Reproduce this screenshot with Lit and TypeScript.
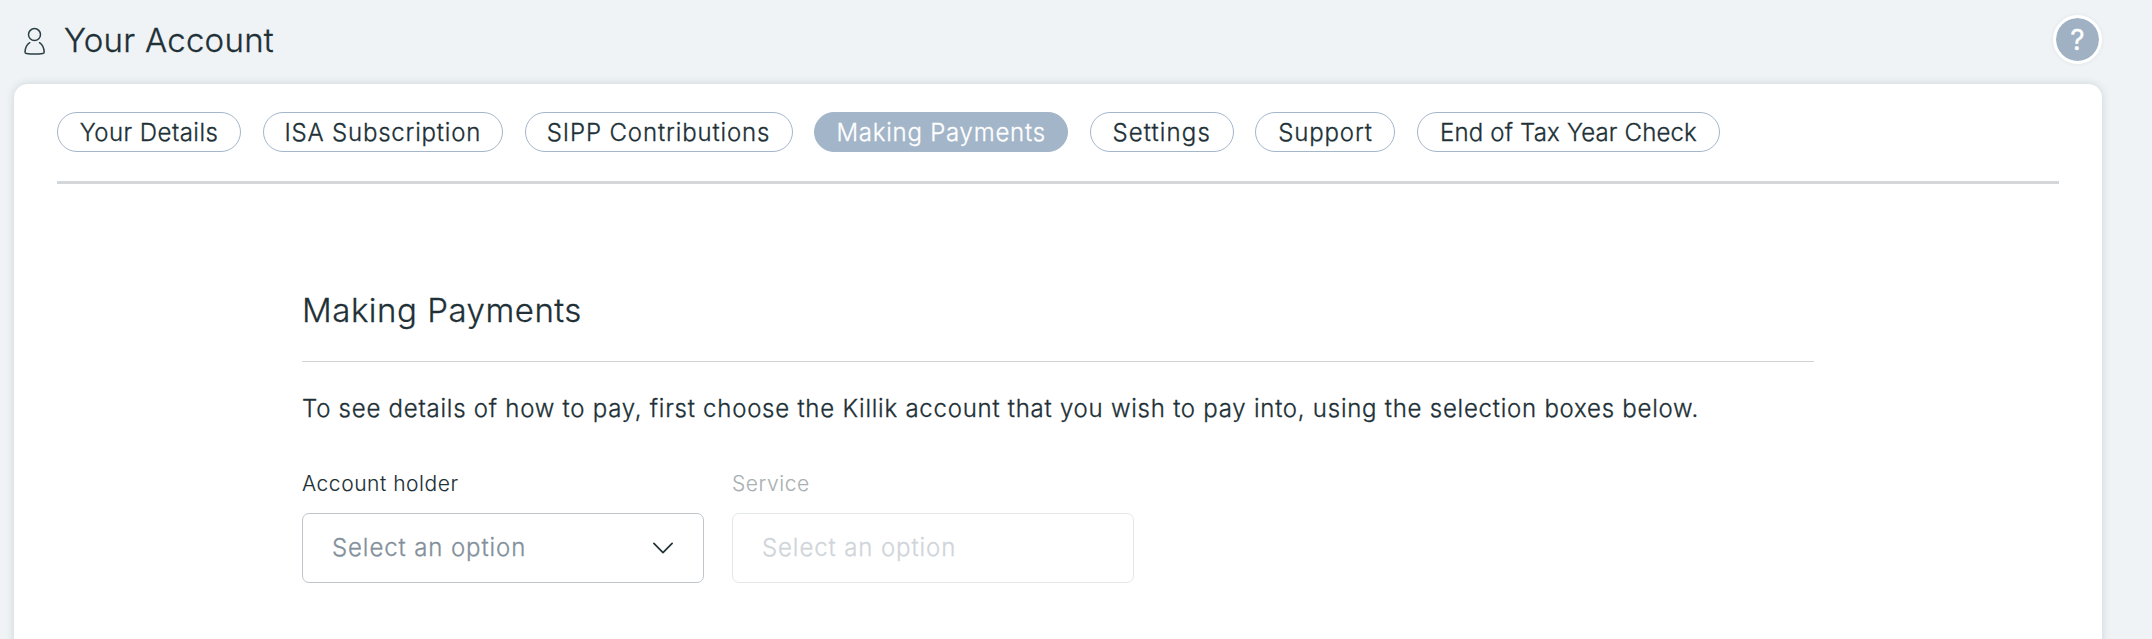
import { LitElement, html, css } from 'lit';
import { customElement, property } from 'lit/decorators.js';
import { classMap } from 'lit/directives/class-map.js';

interface Tab {
  id: string;
  label: string;
}

const TABS: Tab[] = [
  { id: 'details', label: 'Your Details' },
  { id: 'isa', label: 'ISA Subscription' },
  { id: 'sipp', label: 'SIPP Contributions' },
  { id: 'payments', label: 'Making Payments' },
  { id: 'settings', label: 'Settings' },
  { id: 'support', label: 'Support' },
  { id: 'tax', label: 'End of Tax Year Check' },
];

@customElement('select-field')
export class SelectField extends LitElement {
  @property() label = '';
  @property({ type: Boolean, reflect: true }) disabled = false;

  static styles = css`
    :host {
      display: block;
      width: 402px;
      color: #203036;
    }
    .label {
      height: 30px;
      line-height: 30px;
      margin-bottom: 14px;
      font-size: 21px;
      letter-spacing: 0.54px;
      -webkit-text-stroke-width: 0.1px;
      white-space: nowrap;
    }
    .box {
      box-sizing: border-box;
      height: 70px;
      display: flex;
      align-items: center;
      justify-content: space-between;
      padding: 0 30.5px 1px 29px;
      border: 1px solid #bfc5c9;
      border-radius: 7px;
      background: #fff;
    }
    .value {
      font-size: 24px;
      line-height: 30px;
      letter-spacing: 0.9px;
      color: #82909b;
      white-space: nowrap;
    }
    .chevron {
      display: block;
      width: 20px;
      height: 12px;
    }
    :host([disabled]) .label {
      color: #a9b0b2;
      letter-spacing: 0.57px;
    }
    :host([disabled]) .box {
      border-color: #e3e7e8;
    }
    :host([disabled]) .value {
      color: #d0d5da;
    }
  `;

  render() {
    return html`
      <div class="label">${this.label}</div>
      <div class="box">
        <span class="value">Select an option</span>
        ${this.disabled
          ? ''
          : html`<svg class="chevron" viewBox="0 0 20 12" fill="none" stroke="#203338" stroke-width="1.7" stroke-linecap="round" stroke-linejoin="round">
              <path d="M0.9 1.4 L10 10.6 L19.1 1.4" />
            </svg>`}
      </div>
    `;
  }
}

@customElement('app-root')
export class AppRoot extends LitElement {
  @property() active = 'payments';

  static styles = css`
    :host {
      display: flex;
      flex-direction: column;
      box-sizing: border-box;
      height: 639px;
      overflow: hidden;
      padding: 0 50px 0 14px;
      background: #eff3f6;
      color: #203036;
      font-family: Inter, 'Liberation Sans', sans-serif;
      font-weight: 300;
      -webkit-text-stroke-width: 0.3px;
    }
    .header {
      flex: none;
      height: 84px;
      display: flex;
      align-items: flex-start;
      justify-content: space-between;
    }
    .title {
      display: flex;
      align-items: flex-start;
      padding-left: 10px;
    }
    .person {
      display: block;
      width: 22px;
      height: 28px;
      margin-top: 27px;
    }
    h1,
    h2 {
      margin: 0;
      font-weight: 300;
      font-size: 33px;
      line-height: 40px;
      white-space: nowrap;
    }
    h1 {
      margin: 20px 0 0 18px;
      letter-spacing: 0.26px;
    }
    .help {
      display: flex;
      align-items: center;
      justify-content: center;
      box-sizing: border-box;
      width: 49px;
      height: 49px;
      margin-top: 15px;
      border: 3px solid #fff;
      border-radius: 50%;
      background: #9fb1c3;
      background-clip: padding-box;
      box-shadow: 0 0 4px rgba(32, 48, 54, 0.07);
      color: #fff;
      font-size: 28px;
      font-weight: 400;
      line-height: 40px;
    }
    .card {
      flex: none;
      box-sizing: border-box;
      height: 600px;
      padding: 28px 43px 0;
      border-radius: 14px;
      background: #fff;
      box-shadow: 0 0 8px rgba(32, 60, 60, 0.17);
    }
    .tabs {
      display: flex;
      gap: 21.8px;
      padding-bottom: 29px;
      border-bottom: 3px solid #d3d7da;
    }
    .tab {
      box-sizing: border-box;
      height: 40px;
      padding: 2px 0 0;
      border: 1px solid #a3b6ca;
      border-radius: 20px;
      background: #fff;
      color: inherit;
      font: inherit;
      -webkit-text-stroke-width: 0.3px;
      font-size: 24px;
      line-height: 36px;
      text-align: center;
      white-space: nowrap;
    }
    .active {
      background: #a3b5c8;
      color: #fff;
    }
    .details { width: 184px; letter-spacing: 0.46px; }
    .isa { width: 240px; letter-spacing: 0.8px; }
    .sipp { width: 268px; letter-spacing: 0.87px; }
    .payments { width: 253.5px; letter-spacing: 0.76px; }
    .settings { width: 144px; letter-spacing: 1.15px; }
    .support { width: 140px; letter-spacing: 0.87px; }
    .tax { width: 302.5px; letter-spacing: 0.16px; }
    .content {
      width: 1512px;
      margin: 106px 0 0 245px;
    }
    h2 {
      letter-spacing: 0.52px;
      padding-bottom: 31px;
      border-bottom: 1px solid #cfd3d5;
    }
    .intro {
      margin: 32px 0 45px;
      font-size: 24px;
      line-height: 30px;
      letter-spacing: 0.752px;
      white-space: nowrap;
    }
    .fields {
      display: flex;
      gap: 28px;
    }
  `;

  render() {
    return html`
      <header class="header">
        <div class="title">
          <svg class="person" viewBox="0 0 22 28" fill="none" stroke="#2a4045" stroke-width="1.5" stroke-linecap="round">
            <circle cx="10.5" cy="7.6" r="6" />
            <path d="M5.7 15.7 C2.8 17.6 1.2 21.5 1 25.1 Q1 26.4 2.3 26.5 C7 27.1 14 27.1 18.9 26.5 Q20.2 26.4 20.2 25.1 C20 21.5 18.4 17.6 15.5 15.7" />
          </svg>
          <h1>Your Account</h1>
        </div>
        <div class="help">?</div>
      </header>
      <main class="card">
        <nav class="tabs">
          ${TABS.map(
            (t) => html`<button
              class=${classMap({ tab: true, [t.id]: true, active: t.id === this.active })}
            >${t.label}</button>`,
          )}
        </nav>
        <section class="content">
          <h2>Making Payments</h2>
          <p class="intro">To see details of how to pay, first choose the Killik account that you wish to pay into, using the selection boxes below.</p>
          <div class="fields">
            <select-field label="Account holder"></select-field>
            <select-field label="Service" disabled></select-field>
          </div>
        </section>
      </main>
    `;
  }
}
